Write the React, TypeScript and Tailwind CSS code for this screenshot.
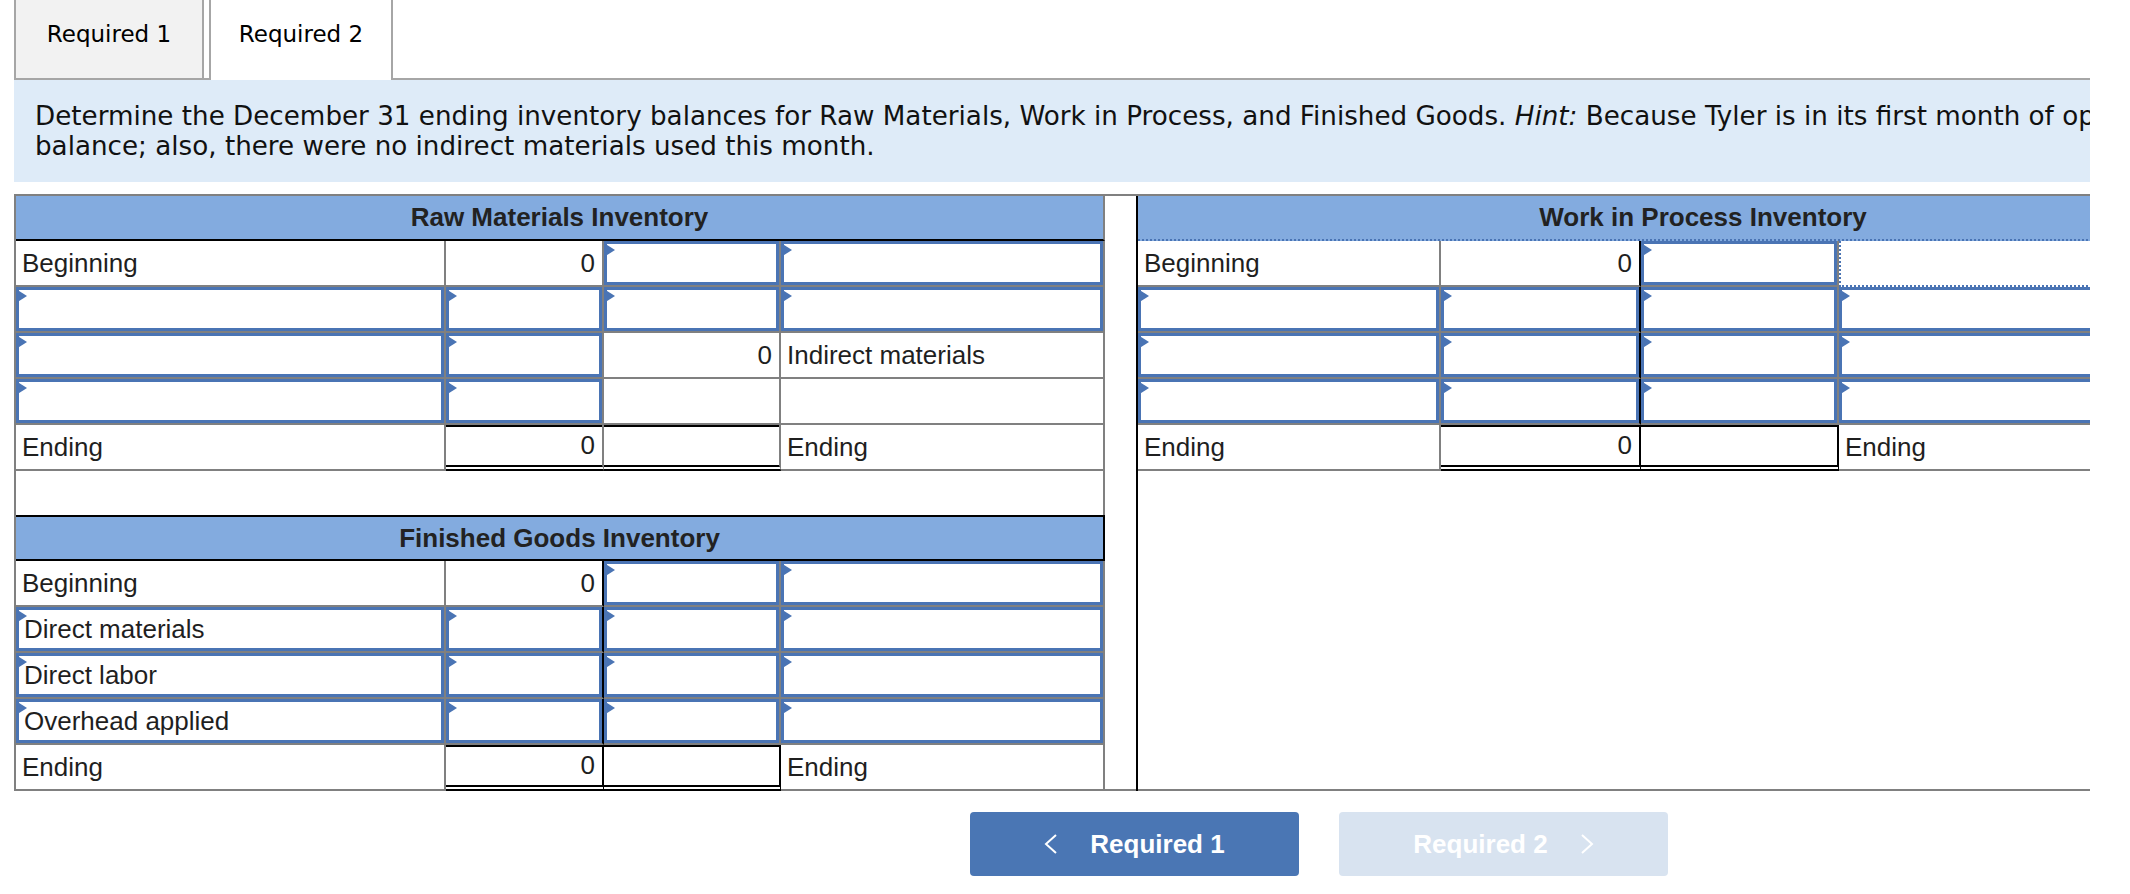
import React from "react";

type Kind = "label" | "value" | "input" | "empty" | "ending" | "focus";

type CellDef = {
  k: Kind;
  t?: string;
  dark?: boolean; // black right border
};

const L = (t: string): CellDef => ({ k: "label", t });
const V = (t: string, dark?: boolean): CellDef => ({ k: "value", t, dark });
const I = (t?: string, dark?: boolean): CellDef => ({ k: "input", t, dark });
const E: CellDef = { k: "empty" };
const END = (t: string, dark?: boolean): CellDef => ({ k: "ending", t, dark });

function Marker() {
  return (
    <svg className="absolute left-0 top-[2px]" width="11" height="14" viewBox="0 0 11 14">
      <polygon points="0,0 11,7 0,14" fill="#4a74b4" />
    </svg>
  );
}

function Cell({ k, t, dark }: CellDef) {
  const right = dark ? "border-r-black" : "border-r-[#808080]";

  if (k === "ending") {
    return (
      <div
        className={`flex h-[46px] items-center justify-end border-r-2 border-b-[6px] border-double border-b-black pr-[7px] shadow-[inset_0_2px_0_#000] ${right}`}
      >
        {t}
      </div>
    );
  }

  if (k === "focus") {
    return <div className="h-[46px] border-b-2 border-l-2 border-dotted border-[#4a74b4]" />;
  }

  if (k === "input") {
    return (
      <div className={`relative h-[46px] border-r-2 border-b-2 border-b-[#808080] ${right}`}>
        <div className="flex h-full items-center border-[3px] border-[#4a74b4] pl-[5px]">{t}</div>
        <Marker />
      </div>
    );
  }

  return (
    <div
      className={`flex h-[46px] items-center border-r-2 border-b-2 border-b-[#808080] ${right} ${
        k === "value" ? "justify-end pr-[7px]" : "pl-[6px]"
      }`}
    >
      {t}
    </div>
  );
}

const rawRows: CellDef[][] = [
  [L("Beginning"), V("0"), I(), I()],
  [I(), I(), I(), I()],
  [I(), I(), V("0"), L("Indirect materials")],
  [I(), I(), E, E],
  [L("Ending"), END("0"), END(""), L("Ending")],
];

const finishedRows: CellDef[][] = [
  [L("Beginning"), V("0", true), I(), I()],
  [I("Direct materials"), I(undefined, true), I(), I()],
  [I("Direct labor"), I(undefined, true), I(), I()],
  [I("Overhead applied"), I(undefined, true), I(), I()],
  [L("Ending"), END("0", true), END("", true), L("Ending")],
];

const processRows: CellDef[][] = [
  [L("Beginning"), V("0", true), I(), { k: "focus" }],
  [I(), I(undefined, true), I(), I()],
  [I(), I(undefined, true), I(), I()],
  [I(), I(undefined, true), I(), I()],
  [L("Ending"), END("0", true), END("", true), L("Ending")],
];

function Rows({ rows }: { rows: CellDef[][] }) {
  return (
    <>
      {rows.flat().map((c, i) => (
        <Cell key={i} {...c} />
      ))}
    </>
  );
}

function Chevron({ dir }: { dir: "left" | "right" }) {
  return (
    <svg width="14" height="20" viewBox="0 0 14 20" fill="none" stroke="white" strokeWidth="2">
      <polyline points={dir === "left" ? "12,1 2,10 12,19" : "2,1 12,10 2,19"} />
    </svg>
  );
}

export default function App() {
  return (
    <div className="h-[894px] w-[2130px] overflow-hidden bg-white text-[#1f1f1f]">
      <div className="ml-[14px] w-[2076px] overflow-hidden">
        {/* tabs */}
        <div className="flex h-[80px] font-['DejaVu_Sans',Verdana,sans-serif] text-[23px] leading-[30px] text-black">
          <div className="flex w-[190px] justify-center border-x-2 border-b-2 border-[#a6a6a6] bg-[#f2f2f2] pt-[19px]">
            Required 1
          </div>
          <div className="w-[5px] border-b-2 border-[#a6a6a6]" />
          <div className="flex w-[184px] justify-center border-x-2 border-[#a6a6a6] bg-white pt-[19px]">
            Required 2
          </div>
          <div className="flex-1 border-b-2 border-[#a6a6a6]" />
        </div>

        <div className="whitespace-nowrap bg-[#deebf8] py-[21px] pl-[21px] font-['DejaVu_Sans',Verdana,sans-serif] text-[26.2px] leading-[30px] text-[#111]">
          Determine the December 31 ending inventory balances for Raw Materials, Work in Process, and Finished Goods.{" "}
          <i>Hint:</i> Because Tyler is in its first month of operations, there is no beginning
          <br />
          balance; also, there were no indirect materials used this month.
        </div>

        {/* accounts */}
        <div className="mt-[12px] flex border-t-2 border-l-2 border-[#808080] font-['Liberation_Sans',Arial,sans-serif] text-[26px]">
          <div className="w-[1089px] shrink-0">
            <div className="grid grid-cols-[430px_158px_177px_324px]">
              <div className="col-span-4 flex h-[45px] items-center justify-center border-r-2 border-b-2 border-r-[#808080] border-b-black bg-[#83abdf] font-bold text-[#222]">
                Raw Materials Inventory
              </div>
              <Rows rows={rawRows} />
            </div>
            <div className="h-[44px] border-r-2 border-[#808080]" />
            <div className="grid grid-cols-[430px_158px_177px_324px]">
              <div className="col-span-4 flex h-[46px] items-center justify-center border-y-2 border-r-2 border-black bg-[#83abdf] font-bold text-[#222]">
                Finished Goods Inventory
              </div>
              <Rows rows={finishedRows} />
            </div>
          </div>

          <div className="w-[31px] shrink-0 border-b-2 border-[#808080]" />

          <div className="flex min-w-0 flex-1 flex-col border-l-2 border-black">
            <div className="grid w-[1130px] grid-cols-[303px_200px_198px_429px]">
              <div className="col-span-4 flex h-[45px] items-center justify-center border-b-2 border-dotted border-[#4a74b4] bg-[#83abdf] font-bold text-[#222]">
                Work in Process Inventory
              </div>
              <Rows rows={processRows} />
            </div>
            <div className="flex-1 border-b-2 border-[#808080]" />
          </div>
        </div>

        {/* navigation */}
        <div className="ml-[956px] mt-[21px] flex gap-[40px] font-['Liberation_Sans',Arial,sans-serif] text-[26px] font-bold text-white">
          <button className="flex h-[64px] w-[329px] items-center justify-center gap-[32px] rounded-[4px] bg-[#4a76b4]">
            <Chevron dir="left" />
            Required 1
          </button>
          <button className="flex h-[64px] w-[329px] items-center justify-center gap-[32px] rounded-[4px] bg-[#d8e3f0]">
            Required 2
            <Chevron dir="right" />
          </button>
        </div>
      </div>
    </div>
  );
}
